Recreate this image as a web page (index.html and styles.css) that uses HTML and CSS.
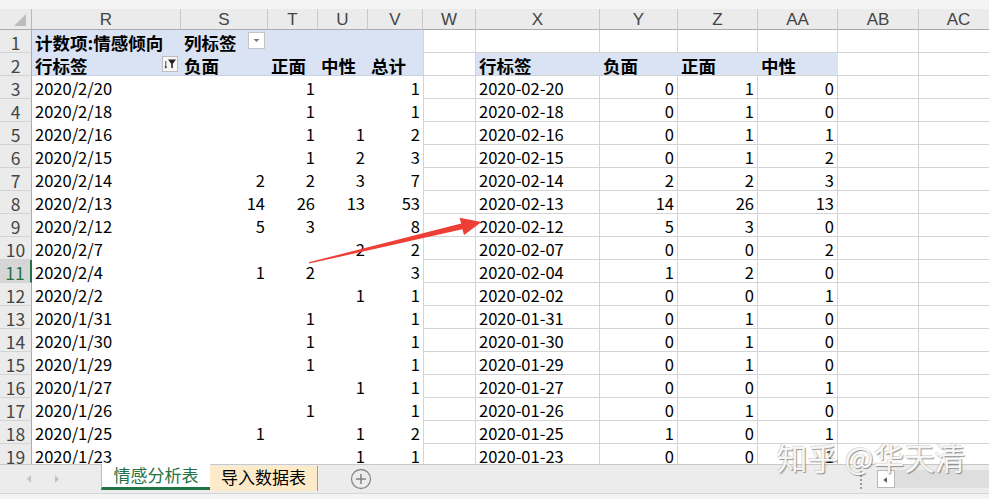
FILE: index.html
```html
<!DOCTYPE html>
<html lang="zh-CN">
<head>
<meta charset="utf-8">
<title>情感分析表</title>
<link rel="stylesheet" href="styles.css">
</head>
<body>
<div class="top"></div>
<div class="sheet">
  <div class="corner"><svg width="14" height="14" viewBox="0 0 14 14"><polygon points="1,13 13,13 13,1" fill="#bdbdbd"/></svg></div>
  <div class="ch">R</div><div class="ch">S</div><div class="ch">T</div><div class="ch">U</div><div class="ch">V</div><div class="ch">W</div><div class="ch">X</div><div class="ch">Y</div><div class="ch">Z</div><div class="ch">AA</div><div class="ch">AB</div><div class="ch">AC</div>

  <div class="rh">1</div><div class="b">计数项:情感倾向</div><div class="b flexcell">列标签<span class="dd"><svg width="17" height="17" viewBox="0 0 17 17"><rect x="0.5" y="0.5" width="16" height="16" fill="#fff" stroke="#c4c4c4"/><polygon points="5.5,7 11.5,7 8.5,10" fill="#7a7a7a"/></svg></span></div><div class="b"></div><div class="b"></div><div class="b"></div><div class="d w"></div><div class="d"></div><div class="d"></div><div class="d"></div><div class="d"></div><div class="d"></div><div class="d"></div>

  <div class="rh">2</div><div class="b b2 flexcell">行标签<span class="flt"><svg width="16" height="16" viewBox="0 0 16 16"><rect x="0.5" y="0.5" width="15" height="15" fill="#f7f7f7" stroke="#bdbdbd"/><polygon points="6,3.5 14,3.5 10.8,7.8 10.8,12.5 9.2,11.5 9.2,7.8" fill="#222"/><line x1="3.8" y1="5" x2="3.8" y2="12" stroke="#444" stroke-width="1"/><polygon points="2.3,10.5 5.3,10.5 3.8,12.8" fill="#444"/></svg></span></div><div class="b b2">负面</div><div class="b b2">正面</div><div class="b b2">中性</div><div class="b b2">总计</div><div class="d w"></div><div class="b bt">行标签</div><div class="b bt">负面</div><div class="b bt">正面</div><div class="b bt">中性</div><div class="d"></div><div class="d"></div>

  <div class="rh">3</div><div class="p">2020/2/20</div><div class="p r"></div><div class="p r">1</div><div class="p r"></div><div class="p r">1</div><div class="d w"></div><div class="d">2020-02-20</div><div class="d r">0</div><div class="d r">1</div><div class="d r">0</div><div class="d"></div><div class="d"></div>
  <div class="rh">4</div><div class="p">2020/2/18</div><div class="p r"></div><div class="p r">1</div><div class="p r"></div><div class="p r">1</div><div class="d w"></div><div class="d">2020-02-18</div><div class="d r">0</div><div class="d r">1</div><div class="d r">0</div><div class="d"></div><div class="d"></div>
  <div class="rh">5</div><div class="p">2020/2/16</div><div class="p r"></div><div class="p r">1</div><div class="p r">1</div><div class="p r">2</div><div class="d w"></div><div class="d">2020-02-16</div><div class="d r">0</div><div class="d r">1</div><div class="d r">1</div><div class="d"></div><div class="d"></div>
  <div class="rh">6</div><div class="p">2020/2/15</div><div class="p r"></div><div class="p r">1</div><div class="p r">2</div><div class="p r">3</div><div class="d w"></div><div class="d">2020-02-15</div><div class="d r">0</div><div class="d r">1</div><div class="d r">2</div><div class="d"></div><div class="d"></div>
  <div class="rh">7</div><div class="p">2020/2/14</div><div class="p r">2</div><div class="p r">2</div><div class="p r">3</div><div class="p r">7</div><div class="d w"></div><div class="d">2020-02-14</div><div class="d r">2</div><div class="d r">2</div><div class="d r">3</div><div class="d"></div><div class="d"></div>
  <div class="rh">8</div><div class="p">2020/2/13</div><div class="p r">14</div><div class="p r">26</div><div class="p r">13</div><div class="p r">53</div><div class="d w"></div><div class="d">2020-02-13</div><div class="d r">14</div><div class="d r">26</div><div class="d r">13</div><div class="d"></div><div class="d"></div>
  <div class="rh">9</div><div class="p">2020/2/12</div><div class="p r">5</div><div class="p r">3</div><div class="p r"></div><div class="p r">8</div><div class="d w"></div><div class="d">2020-02-12</div><div class="d r">5</div><div class="d r">3</div><div class="d r">0</div><div class="d"></div><div class="d"></div>
  <div class="rh">10</div><div class="p">2020/2/7</div><div class="p r"></div><div class="p r"></div><div class="p r">2</div><div class="p r">2</div><div class="d w"></div><div class="d">2020-02-07</div><div class="d r">0</div><div class="d r">0</div><div class="d r">2</div><div class="d"></div><div class="d"></div>
  <div class="rh sel">11</div><div class="p">2020/2/4</div><div class="p r">1</div><div class="p r">2</div><div class="p r"></div><div class="p r">3</div><div class="d w"></div><div class="d">2020-02-04</div><div class="d r">1</div><div class="d r">2</div><div class="d r">0</div><div class="d"></div><div class="d"></div>
  <div class="rh">12</div><div class="p">2020/2/2</div><div class="p r"></div><div class="p r"></div><div class="p r">1</div><div class="p r">1</div><div class="d w"></div><div class="d">2020-02-02</div><div class="d r">0</div><div class="d r">0</div><div class="d r">1</div><div class="d"></div><div class="d"></div>
  <div class="rh">13</div><div class="p">2020/1/31</div><div class="p r"></div><div class="p r">1</div><div class="p r"></div><div class="p r">1</div><div class="d w"></div><div class="d">2020-01-31</div><div class="d r">0</div><div class="d r">1</div><div class="d r">0</div><div class="d"></div><div class="d"></div>
  <div class="rh">14</div><div class="p">2020/1/30</div><div class="p r"></div><div class="p r">1</div><div class="p r"></div><div class="p r">1</div><div class="d w"></div><div class="d">2020-01-30</div><div class="d r">0</div><div class="d r">1</div><div class="d r">0</div><div class="d"></div><div class="d"></div>
  <div class="rh">15</div><div class="p">2020/1/29</div><div class="p r"></div><div class="p r">1</div><div class="p r"></div><div class="p r">1</div><div class="d w"></div><div class="d">2020-01-29</div><div class="d r">0</div><div class="d r">1</div><div class="d r">0</div><div class="d"></div><div class="d"></div>
  <div class="rh">16</div><div class="p">2020/1/27</div><div class="p r"></div><div class="p r"></div><div class="p r">1</div><div class="p r">1</div><div class="d w"></div><div class="d">2020-01-27</div><div class="d r">0</div><div class="d r">0</div><div class="d r">1</div><div class="d"></div><div class="d"></div>
  <div class="rh">17</div><div class="p">2020/1/26</div><div class="p r"></div><div class="p r">1</div><div class="p r"></div><div class="p r">1</div><div class="d w"></div><div class="d">2020-01-26</div><div class="d r">0</div><div class="d r">1</div><div class="d r">0</div><div class="d"></div><div class="d"></div>
  <div class="rh">18</div><div class="p">2020/1/25</div><div class="p r">1</div><div class="p r"></div><div class="p r">1</div><div class="p r">2</div><div class="d w"></div><div class="d">2020-01-25</div><div class="d r">1</div><div class="d r">0</div><div class="d r">1</div><div class="d"></div><div class="d"></div>
  <div class="rh">19</div><div class="p">2020/1/23</div><div class="p r"></div><div class="p r"></div><div class="p r">1</div><div class="p r">1</div><div class="d w"></div><div class="d">2020-01-23</div><div class="d r">0</div><div class="d r">0</div><div class="d r">1</div><div class="d"></div><div class="d"></div>
</div>
<div class="tabbar">
  <div class="nav"><span class="arr arr-l"></span><span class="arr arr-r"></span></div>
  <div class="tab tab-active">情感分析表</div>
  <div class="tab tab-color">导入数据表</div>
  <div class="add"><svg width="22" height="22" viewBox="0 0 22 22"><circle cx="11" cy="11" r="9.5" fill="none" stroke="#8a8a8a" stroke-width="1.3"/><line x1="6" y1="11" x2="16" y2="11" stroke="#7a7a7a" stroke-width="1.4"/><line x1="11" y1="6" x2="11" y2="16" stroke="#7a7a7a" stroke-width="1.4"/></svg></div>
  <div class="spacer"></div>
  <div class="dots"></div>
  <div class="sbtn"><svg width="18" height="18" viewBox="0 0 18 18"><polygon points="6,9 10,6 10,12" fill="#555"/></svg></div>
  <div class="track"></div>
</div>
<div class="status"></div>

<svg class="arrow" width="989" height="499" viewBox="0 0 989 499">
  <polygon points="308.9,262.3 461.2,223.4 459.5,217.8 481.5,222 464,235 462.4,229.3 309.2,263.6" fill="#ee3f36"/>
</svg>
<div class="watermark">知乎 @华天清</div>
</body>
</html>
```
FILE: styles.css
```css
* { box-sizing: border-box; margin: 0; padding: 0; }
html, body { width: 989px; height: 499px; overflow: hidden; background: #fff; }
body {
  font-family: "Noto Sans CJK SC", "Liberation Sans", sans-serif;
  color: #000;
  position: relative;
}
.top { height: 9px; background: #f4f4f4; }
.sheet {
  display: grid;
  grid-template-columns: 32px 149px 87px 50px 50px 55px 53px 124px 78px 80px 80px 81px 80px;
  grid-template-rows: 21px;
  grid-auto-rows: 23px;
  height: 455px;
  overflow: hidden;
}
.corner {
  background: #ebebeb;
  border-right: 1px solid #b8b8b8;
  border-bottom: 1px solid #ababab;
  display: flex;
  justify-content: flex-end;
  align-items: flex-end;
  padding: 0 4px 2px 0;
}
.ch {
  background: #ebebeb;
  border-right: 1px solid #c9c9c9;
  border-bottom: 1px solid #ababab;
  color: #444;
  font-family: "Liberation Sans", "Noto Sans CJK SC", sans-serif;
  font-size: 17px;
  text-align: center;
  line-height: 20px;
  padding-top: 1px;
}
.rh {
  background: #ebebeb;
  border-right: 1px solid #ababab;
  border-bottom: 1px solid #d3d3d3;
  color: #444;
  font-size: 17.5px;
  text-align: center;
  line-height: 19px;
  padding-top: 3px;
}
.rh.sel {
  background: #d6d6d6;
  color: #217346;
  border-right: 2px solid #217346;
}
.d, .p, .b {
  font-size: 16.5px;
  line-height: 19px;
  padding: 3px 3px 0 3px;
  white-space: nowrap;
}
.d {
  border-right: 1px solid #d4d4d4;
  border-bottom: 1px solid #d4d4d4;
}
.w { border-left: 1px solid #d4d4d4; }
.r { text-align: right; }
.b {
  background: #dae3f3;
  font-weight: bold;
  font-size: 17.5px;
  padding-left: 3px;
}
.b2 { border-bottom: 1px solid #c7d2e6; }
.bt { border-bottom: 1px solid #d4d4d4; }
.flexcell {
  display: flex;
  justify-content: space-between;
}
.dd { display: block; margin-top: -1px; height: 17px; }
.flt { display: block; margin-top: -1px; height: 16px; }

.tabbar {
  height: 29px;
  background: #ececec;
  border-top: 1px solid #c8c8c8;
  display: flex;
  align-items: flex-start;
}
.nav {
  width: 101px;
  height: 28px;
  display: flex;
  align-items: center;
  padding-left: 27px;
  gap: 24px;
}
.arr { width: 0; height: 0; border-top: 4px solid transparent; border-bottom: 4px solid transparent; }
.arr-l { border-right: 4px solid #c2c2c2; }
.arr-r { border-left: 4px solid #c2c2c2; }
.tab {
  height: 25px;
  font-size: 17px;
  line-height: 22px;
  text-align: center;
  white-space: nowrap;
}
.tab-active {
  width: 109px;
  margin-top: -1px;
  height: 26px;
  background: #fff;
  color: #217346;
  border-left: 1px solid #bdbdbd;
  border-bottom: 3px solid #217346;
}
.tab-color {
  width: 108px;
  margin-top: 1px;
  background: #fdeac8;
  border-right: 1px solid #9a9a9a;
}
.add { margin: 3px 0 0 32px; height: 22px; }
.spacer { flex: 1; }
.dots {
  width: 2px;
  height: 18px;
  margin-top: 6px;
  border-left: 2px dotted #9c9c9c;
  margin-right: 15px;
}
.sbtn {
  width: 18px;
  height: 18px;
  margin-top: 5px;
  background: #fff;
  border: 1px solid #b9b9b9;
  display: flex;
}
.track {
  width: 94px;
  height: 18px;
  margin-top: 5px;
  background: #dedede;
}
.status {
  height: 6px;
  background: #f4f4f4;
  border-top: 1px solid #d6d6d6;
}
.arrow { position: absolute; left: 0; top: 0; pointer-events: none; }
.watermark {
  position: absolute;
  left: 777px;
  top: 437px;
  font-size: 30.5px;
  line-height: 40px;
  color: rgba(255, 255, 255, 0.92);
  text-shadow: 1px 1px 1px rgba(80, 80, 80, 0.6), -1px -1px 0 rgba(190, 190, 190, 0.5);
  white-space: nowrap;
}
```
